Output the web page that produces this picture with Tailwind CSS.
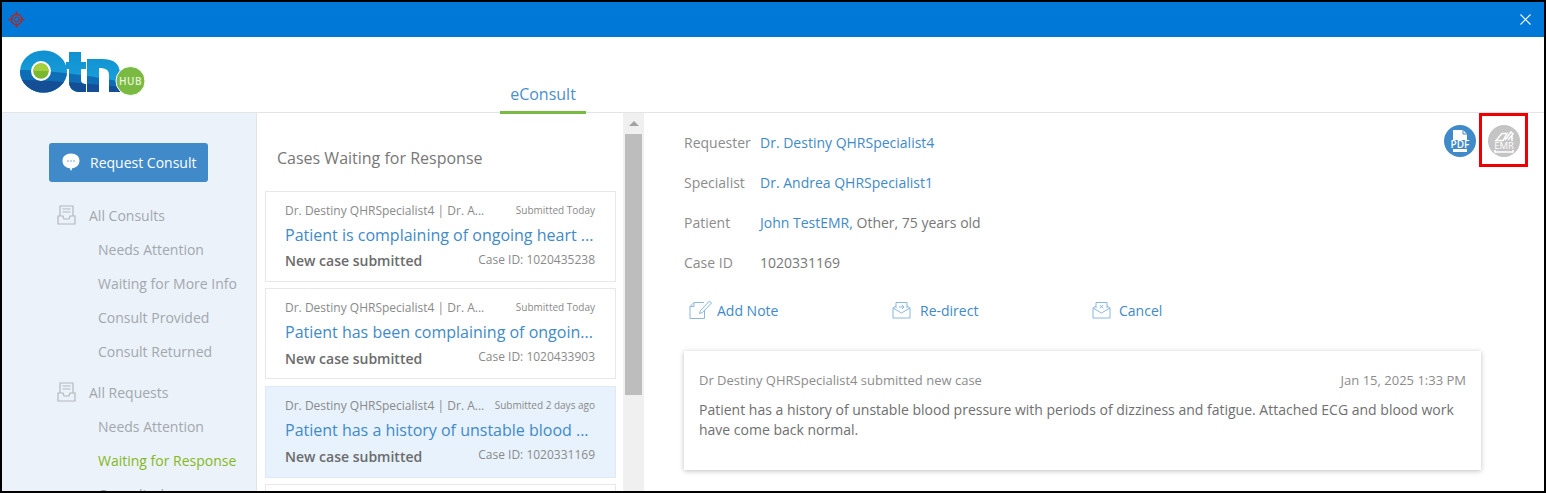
<!DOCTYPE html>
<html lang="en">
<head>
<meta charset="UTF-8">
<title>OTNhub - eConsult</title>
<script src="https://cdn.jsdelivr.net/npm/@tailwindcss/browser@4"></script>
</head>
<body class="font-['Open_Sans',sans-serif] bg-white">
<div class="relative w-[1546px] h-[493px] overflow-hidden border-2 border-black flex flex-col text-[#777]">

  <!-- Title bar -->
  <div class="h-[35px] shrink-0 bg-[#0078d7] flex items-center justify-between pl-[6px] pr-[13px]">
    <svg class="w-[17px] h-[17px] mb-[1px]" viewBox="0 0 17 17" fill="none" stroke="#b5261e">
      <circle cx="8.5" cy="8.5" r="5.2" stroke-width="1.4"/>
      <circle cx="8.5" cy="8.5" r="2.4" stroke-width="1"/>
      <path d="M8.5 0.5v4M8.5 12.5v4M0.5 8.5h4M12.5 8.5h4" stroke-width="1.6"/>
    </svg>
    <svg class="w-[11px] h-[11px]" viewBox="0 0 11 11" stroke="white" stroke-width="1.1"><path d="M0.5 0.5l10 10M10.5 0.5l-10 10"/></svg>
  </div>

  <!-- Header -->
  <div class="relative h-[76px] shrink-0 border-b border-[#e2e4e6]">
    <svg class="absolute left-[18px] top-[12px]" width="128" height="48" viewBox="0 0 128 48">
      <defs>
        <clipPath id="otn">
          <ellipse cx="23.500" cy="22.500" rx="23.500" ry="21"/>
          <path d="M49 3h12v10h5v7h-5v11c0 3 2 4 5 4v8h-6c-7 0-11-4-11-11V20h-3v-7h3z"/>
          <path d="M67 10H82C94 10 100 15 100 25V43H89V26C89 21 86 19 79 19V43H67z"/>
        </clipPath>
        <linearGradient id="top" x1="0" y1="0" x2="0" y2="1">
          <stop offset="0" stop-color="#0f8fd0"/>
          <stop offset="1" stop-color="#1ea7df"/>
        </linearGradient>
      </defs>
      <g clip-path="url(#otn)">
        <rect width="104" height="48" fill="url(#top)"/>
        <path d="M0 21C24 21 60 25 104 33V48H0z" fill="#0f6db5"/>
        <path d="M0 31C24 31 60 34 104 38V48H0z" fill="#144f95"/>
      </g>
      <circle cx="21" cy="22" r="10" fill="white"/>
      <circle cx="21" cy="22" r="7.800" fill="#7ab92f"/>
      <path d="M13.500 22a7.500 7.500 0 0 1 15 0z" fill="#a5cf3f"/>
      <circle cx="110.500" cy="32" r="14.500" fill="#7ab942" stroke="white"/>
      <text x="110.500" y="36" text-anchor="middle" font-size="10" font-weight="600" letter-spacing="0.5" fill="#e8f3d8">HUB</text>
    </svg>
    <div class="absolute left-[498px] bottom-[-2px] w-[86px] h-[30px] border-b-[3px] border-[#7ab942] text-center text-[16px] leading-[20px] text-[#4a8fcb]">eConsult</div>
  </div>

  <div class="flex flex-1 min-h-0">
    <!-- Sidebar -->
    <aside class="w-[255px] shrink-0 bg-[#ebf2fa] border-r border-[#e2e4e6] pt-[30px] overflow-hidden">
      <div class="ml-[47px] w-[159px] h-[39px] bg-[#418ac9] rounded-[3px] flex items-center pl-[13px] gap-[10px] text-white text-[14px]">
        <svg class="w-[18px] h-[19px]" viewBox="0 0 18 19"><path d="M9 0.5c5 0 8.5 3 8.5 7.2S14 15 10.500 15L9 18l-1.500-3C3.800 15 0.500 12 0.500 7.700S4 0.500 9 0.500z" fill="white"/><circle cx="6" cy="8" r="0.7" fill="#418ac9"/><circle cx="9" cy="8" r="0.7" fill="#418ac9"/><circle cx="12" cy="8" r="0.7" fill="#418ac9"/></svg>
        <span>Request Consult</span>
      </div>

      <div class="mt-[18px] ml-[55px] flex items-center gap-[13px] h-[30px] text-[14px] text-[#a3a8ad]">
        <svg class="w-[19px] h-[20px]" viewBox="0 0 19 20" fill="none" stroke="#b5b8bb" stroke-width="1.200"><path d="M3 11V1h13v10M5.500 4h8M5.500 7h8M1 11v8h17v-8h-5l-1 3H7l-1-3z"/></svg>
        <span>All Consults</span>
      </div>
      <div class="ml-[96px] text-[14px] text-[#a3a8ad]">
        <div class="h-[34px] mt-[3px] leading-[34px]">Needs Attention</div>
        <div class="h-[34px] leading-[34px]">Waiting for More Info</div>
        <div class="h-[34px] leading-[34px]">Consult Provided</div>
        <div class="h-[34px] leading-[34px]">Consult Returned</div>
      </div>

      <div class="mt-[8px] ml-[55px] flex items-center gap-[13px] h-[30px] text-[14px] text-[#a3a8ad]">
        <svg class="w-[19px] h-[20px]" viewBox="0 0 19 20" fill="none" stroke="#b5b8bb" stroke-width="1.200"><path d="M3 11V1h13v10M5.500 4h8M5.500 7h8M1 11v8h17v-8h-5l-1 3H7l-1-3z"/></svg>
        <span>All Requests</span>
      </div>
      <div class="ml-[96px] text-[14px] text-[#a3a8ad]">
        <div class="h-[34px] mt-[3px] leading-[34px]">Needs Attention</div>
        <div class="h-[34px] leading-[34px] text-[#84b81c]">Waiting for Response</div>
        <div class="h-[34px] leading-[34px]">Consulted</div>
      </div>
    </aside>

    <!-- Case list -->
    <section class="w-[366px] shrink-0 overflow-hidden">
      <h2 class="mt-[32px] ml-[20px] h-[26px] text-[16px] leading-[26px] text-[#777]">Cases Waiting for Response</h2>
      <div class="mt-[20px] ml-[8px] w-[351px] flex flex-col gap-[6px]">
        <div class="h-[91px] border border-[#e6e8ea] pl-[19px] pr-[20px] pt-[10px]">
          <div class="flex justify-between items-center h-[17px] text-[#8a8a8a]"><span class="text-[12px]">Dr. Destiny QHRSpecialist4 | Dr. A...</span><span class="text-[10px]">Submitted Today</span></div>
          <div class="h-[30px] text-[16px] leading-[32px] text-[#418ac9] whitespace-nowrap">Patient is complaining of ongoing heart ...</div>
          <div class="flex justify-between items-center h-[22px]"><span class="text-[14px] font-semibold text-[#6b6b6b]">New case submitted</span><span class="text-[12px] text-[#8a8a8a]">Case ID: 1020435238</span></div>
        </div>
        <div class="h-[91px] border border-[#e6e8ea] pl-[19px] pr-[20px] pt-[10px]">
          <div class="flex justify-between items-center h-[17px] text-[#8a8a8a]"><span class="text-[12px]">Dr. Destiny QHRSpecialist4 | Dr. A...</span><span class="text-[10px]">Submitted Today</span></div>
          <div class="h-[30px] text-[16px] leading-[32px] text-[#418ac9] whitespace-nowrap">Patient has been complaining of ongoin...</div>
          <div class="flex justify-between items-center h-[22px]"><span class="pt-[2px] text-[14px] font-semibold text-[#6b6b6b]">New case submitted</span><span class="text-[12px] text-[#8a8a8a]">Case ID: 1020433903</span></div>
        </div>
        <div class="mt-[1px] h-[92px] border border-[#e0e8f0] bg-[#e7f2fd] pl-[19px] pr-[20px] pt-[10px]">
          <div class="flex justify-between items-center h-[17px] text-[#8a8a8a]"><span class="text-[12px]">Dr. Destiny QHRSpecialist4 | Dr. A...</span><span class="text-[10px]">Submitted 2 days ago</span></div>
          <div class="h-[30px] text-[16px] leading-[32px] text-[#418ac9] whitespace-nowrap">Patient has a history of unstable blood ...</div>
          <div class="flex justify-between items-center h-[22px]"><span class="pt-[2px] text-[14px] font-semibold text-[#6b6b6b]">New case submitted</span><span class="text-[12px] text-[#8a8a8a]">Case ID: 1020331169</span></div>
        </div>
        <div class="h-[91px] border border-[#e6e8ea]"></div>
      </div>
    </section>

    <!-- Scrollbar -->
    <div class="w-[21px] shrink-0 bg-[#f0f0f0] flex flex-col items-center">
      <div class="h-[21px] flex items-center justify-center">
        <div class="w-0 h-0 border-x-[5px] border-x-transparent border-b-[5px] border-b-[#a3a3a3]"></div>
      </div>
      <div class="w-[17px] h-[261px] bg-[#bdbdbd]"></div>
    </div>

    <!-- Detail -->
    <main class="relative flex-1 min-w-0 pl-[40px] text-[14px]">
      <div class="pt-[9px]">
        <div class="flex items-center h-[40px]"><span class="w-[76px] text-[#8c8c8c]">Requester</span><span class="text-[#418ac9]">Dr. Destiny QHRSpecialist4</span></div>
        <div class="flex items-center h-[40px]"><span class="w-[76px] text-[#8c8c8c]">Specialist</span><span class="text-[#418ac9]">Dr. Andrea QHRSpecialist1</span></div>
        <div class="flex items-center h-[40px]"><span class="w-[76px] text-[#8c8c8c]">Patient</span><span><span class="text-[#418ac9]">John TestEMR,</span> Other, 75 years old</span></div>
        <div class="flex items-center h-[40px]"><span class="w-[76px] text-[#8c8c8c]">Case ID</span><span>1020331169</span></div>
      </div>

      <div class="flex mt-[8px] h-[40px] items-center text-[#418ac9]">
        <div class="flex items-center w-[203px] pl-[5px] gap-[5px]">
          <svg class="w-[23px] h-[20px]" viewBox="0 0 23 20" fill="none" stroke="#8ab8e0" stroke-width="1"><path d="M15 2.500H5L1 6.500V18.500h14.500V10M5 2.500v4H1M20.500 1l2 2-9 9.500-3 1 1-3z"/></svg>
          <span>Add Note</span>
        </div>
        <div class="flex items-center w-[200px] pl-[5px] gap-[9px]">
          <svg class="w-[19px] h-[18px]" viewBox="0 0 19 18" fill="none" stroke="#8ab8e0" stroke-width="1"><path d="M4 7V1.500h11V7M1 7l3-2M18 7l-3-2M1 7v10h17V7M1 7l8.500 5L18 7M7 6h5M10 4l2 2-2 2"/></svg>
          <span>Re-direct</span>
        </div>
        <div class="flex items-center pl-[5px] gap-[8px]">
          <svg class="w-[19px] h-[18px]" viewBox="0 0 19 18" fill="none" stroke="#8ab8e0" stroke-width="1"><path d="M4 7V1.500h11V7M1 7l3-2M18 7l-3-2M1 7v10h17V7M1 7l8.500 5L18 7M7.800 4l3.400 3.400M11.200 4L7.800 7.400"/></svg>
          <span>Cancel</span>
        </div>
      </div>

      <div class="mt-[21px] w-[797px] h-[119px] bg-white shadow-[0_1px_5px_rgba(0,0,0,0.25)] px-[15px] pt-[20px]">
        <div class="flex justify-between text-[13px] leading-[18px] text-[#8c8c8c]"><span>Dr Destiny QHRSpecialist4 submitted new case</span><span>Jan 15, 2025 1:33 PM</span></div>
        <p class="mt-[11px] text-[14px] leading-[20px] text-[#6f6f6f]">Patient has a history of unstable blood pressure with periods of dizziness and fatigue. Attached ECG and blood work have come back normal.</p>
      </div>

      <!-- Export buttons -->
      <div class="absolute right-[68px] top-[12px] w-[32px] h-[32px] rounded-full bg-[#418ac9] flex items-center justify-center">
        <svg class="w-[20px] h-[24px]" viewBox="0 0 20 24"><path d="M3 11V1h10l4 4v6z" fill="white"/><path d="M13 1v4h4" fill="none" stroke="#418ac9"/><path d="M3 20h14v3H3z" fill="white"/><text x="10" y="18.500" text-anchor="middle" font-size="10" font-weight="600" fill="white">PDF</text></svg>
      </div>
      <div class="absolute right-[24px] top-[12px] w-[32px] h-[32px] rounded-full bg-[#c4c4c4] flex items-center justify-center">
        <svg class="w-[24px] h-[24px]" viewBox="0 0 24 24" fill="none" stroke="white" stroke-width="1.500"><path d="M4 11.500l6-7h5l-4 7z"/><path d="M13 11l6-8 2 2-5 6M20 7v5"/><path d="M3 21v2h18v-2" stroke-width="1.600"/><text x="12" y="20" text-anchor="middle" font-size="9.500" font-weight="500" fill="white" stroke="none">EMR</text></svg>
      </div>
    </main>
  </div>

  <!-- Red highlight -->
  <div class="absolute left-[1477px] top-[111px] w-[49px] h-[54px] border-[3px] border-[#ee0000]"></div>
</div>
</body>
</html>
